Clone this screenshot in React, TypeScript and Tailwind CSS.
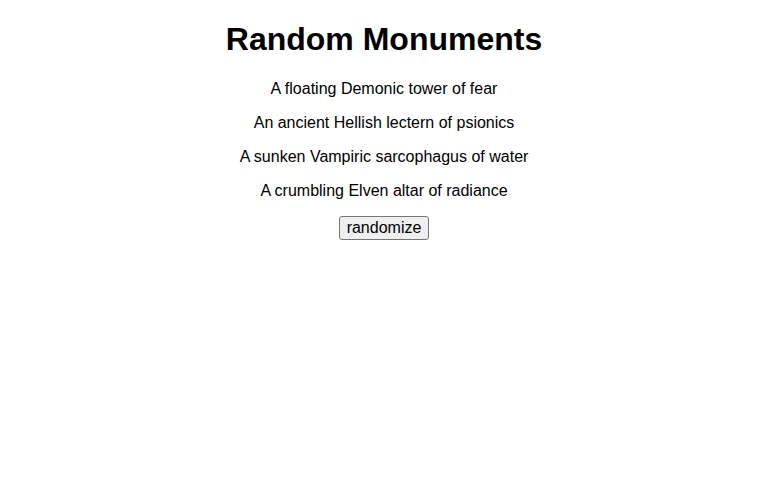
import React, { useState } from "react";

const ages = ["floating", "ancient", "sunken", "crumbling", "forgotten", "shattered"];
const kinds = ["Demonic", "Hellish", "Vampiric", "Elven", "Dwarven", "Celestial"];
const things = ["tower", "lectern", "sarcophagus", "altar", "obelisk", "throne"];
const themes = ["fear", "psionics", "water", "radiance", "shadow", "fire"];

const initial = [
  "A floating Demonic tower of fear",
  "An ancient Hellish lectern of psionics",
  "A sunken Vampiric sarcophagus of water",
  "A crumbling Elven altar of radiance",
];

function pick<T>(list: T[]): T {
  return list[Math.floor(Math.random() * list.length)];
}

function monument(): string {
  const age = pick(ages);
  const article = /^[aeiou]/i.test(age) ? "An" : "A";
  return `${article} ${age} ${pick(kinds)} ${pick(things)} of ${pick(themes)}`;
}

export default function App() {
  const [items, setItems] = useState<string[]>(initial);

  return (
    <div
      className="min-h-[480px] bg-white text-black text-center"
      style={{ fontFamily: '"Liberation Sans", Arial, sans-serif' }}
    >
      <h1 className="text-[32px] leading-[37px] font-bold pt-[21px] mb-[22px]">Random Monuments</h1>
      {items.map((text, i) => (
        <p key={i} className="text-base leading-[18px] mb-[16px]">
          {text}
        </p>
      ))}
      <div>
        <button
          onClick={() => setItems(items.map(() => monument()))}
          className="h-6 px-[7px] text-base leading-[18px] bg-[#efefef] border border-[#767676] rounded-[3px] text-black"
        >
          randomize
        </button>
      </div>
    </div>
  );
}
